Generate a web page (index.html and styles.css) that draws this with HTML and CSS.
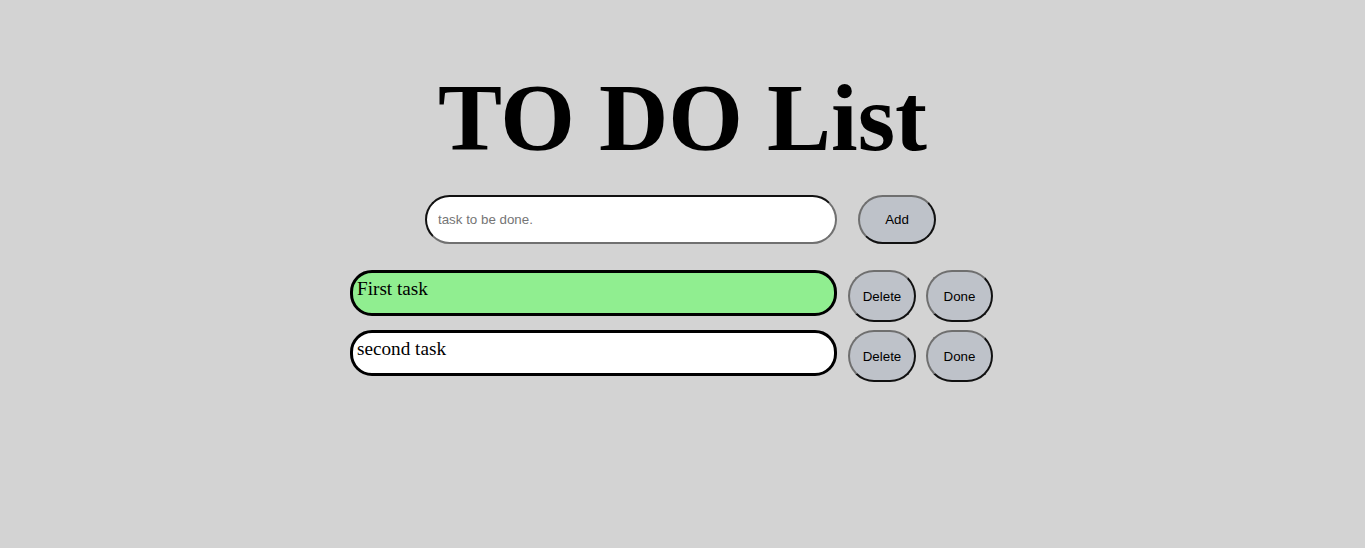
FILE: index.html
```html
<!DOCTYPE html>
<html lang="en">
<head>
<meta charset="utf-8">
<title>TO DO List</title>
<link rel="stylesheet" href="styles.css">
</head>
<body>
<main class="app">
  <h1 class="title">TO DO List</h1>
  <div class="add-row">
    <input class="task-input" type="text" placeholder="task to be done.">
    <button class="btn btn-add">Add</button>
  </div>
  <ul class="task-list">
    <li class="task-row">
      <div class="task task-done">First task</div>
      <button class="btn btn-delete">Delete</button>
      <button class="btn btn-done">Done</button>
    </li>
    <li class="task-row">
      <div class="task">second task</div>
      <button class="btn btn-delete">Delete</button>
      <button class="btn btn-done">Done</button>
    </li>
  </ul>
</main>
</body>
</html>
```

FILE: styles.css
```css
html, body {
  margin: 0;
  padding: 0;
}

body {
  background: #d3d3d3;
  font-family: "Liberation Serif", "Times New Roman", serif;
  color: #000;
}

.app {
  display: flex;
  flex-direction: column;
  align-items: center;
}

.title {
  font-family: "Liberation Serif", "Times New Roman", serif;
  font-size: 96px;
  font-weight: bold;
  line-height: 106px;
  margin: 65px 0 24px 0;
}

.add-row {
  display: flex;
  align-items: center;
  gap: 21px;
  padding-right: 4px;
}

.task-input {
  box-sizing: border-box;
  width: 412px;
  height: 49px;
  border: 2px solid;
  border-color: #111 #707070 #707070 #111;
  border-radius: 25px;
  background: #fff;
  padding: 0 11px;
  font-family: "Liberation Sans", Arial, sans-serif;
  font-size: 13.33px;
  outline: none;
}

.task-input::placeholder {
  color: #757575;
}

.btn {
  box-sizing: border-box;
  border: 2px solid;
  border-color: #6f6f6f #111 #111 #6f6f6f;
  background: #bec2c9;
  font-family: "Liberation Sans", Arial, sans-serif;
  font-size: 13.33px;
  color: #000;
  padding: 0;
  border-radius: 26px;
}

.btn-add {
  width: 78px;
  height: 49px;
}

.task-list {
  list-style: none;
  margin: 26px 0 0 0;
  padding: 0;
  display: flex;
  flex-direction: column;
  gap: 8px;
}

.task-row {
  display: flex;
  align-items: flex-start;
  padding-right: 22px;
}

.task {
  box-sizing: border-box;
  width: 487px;
  height: 46px;
  border: 3px solid #000;
  border-radius: 22px;
  background: #fff;
  padding: 5px 4px 4px 4px;
  font-size: 19.2px;
  line-height: 22px;
}

.task-done {
  background: #90ee90;
}

.btn-delete {
  width: 68px;
  height: 52px;
  margin-left: 11px;
}

.btn-done {
  width: 67px;
  height: 52px;
  margin-left: 10px;
}
```
